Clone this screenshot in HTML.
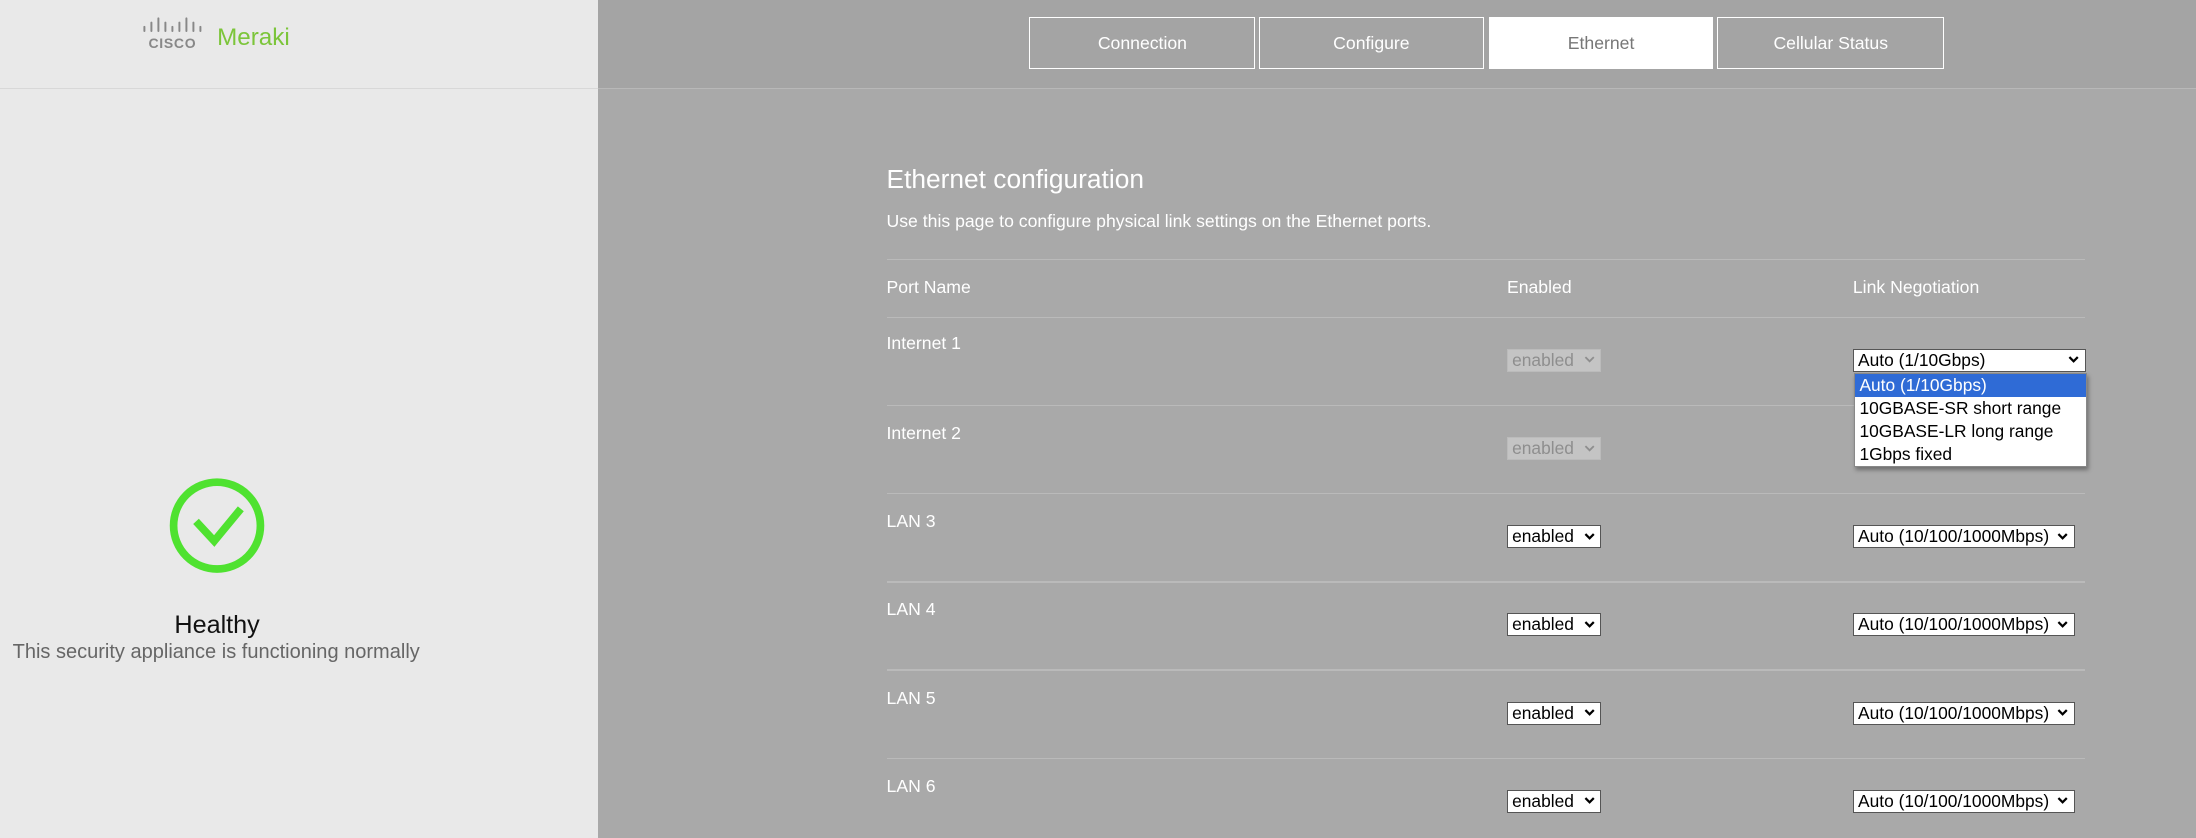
<!DOCTYPE html>
<html><head><meta charset="utf-8"><style>
html,body{margin:0;padding:0;overflow:hidden}
body{width:1568px;height:598px;zoom:1.40051;font-family:"Liberation Sans",Arial,sans-serif;position:relative;background:#a9a9a9}
.abs{position:absolute}
#left{left:0;top:0;width:427px;height:598px;background:#e9e9e9}
#lhead{left:0;top:0;width:427px;height:63px;border-bottom:1px solid #d8d8d8}
#rhead{left:427px;top:0;width:1141px;height:63px;background:#a4a4a4;border-bottom:1px solid #b8b8b8}
.tab{top:12px;height:36px;border:1px solid #fff;color:#fff;font-size:12.6px;line-height:36px;text-align:center;box-sizing:content-box}
.t{color:#fff;font-size:12.6px}
.line{left:633px;width:856px;height:1px;background:#bababa}
.sel{height:15px;border:1px solid #555;background:#fff;font-size:12.4px;line-height:15px;padding-left:3px;box-sizing:content-box;color:#000}
.sel.dis{background:#c4c4c4;border-color:#bbb;color:#8e8e8e}
.chev{position:absolute;right:4px;top:4px;width:8px;height:6px}
</style></head><body>
<div id="left" class="abs"></div>
<div id="lhead" class="abs"></div>
<svg class="abs" style="left:102px;top:12px" width="42" height="24" viewBox="0 0 42 24">
<g stroke="#888" stroke-width="1.4" stroke-linecap="round">
<line x1="1" y1="7" x2="1" y2="10"/><line x1="6" y1="4" x2="6" y2="10"/><line x1="11" y1="1" x2="11" y2="10"/><line x1="16" y1="4" x2="16" y2="10"/><line x1="21" y1="7" x2="21" y2="10"/><line x1="26" y1="4" x2="26" y2="10"/><line x1="31" y1="1" x2="31" y2="10"/><line x1="36" y1="4" x2="36" y2="10"/><line x1="41" y1="7" x2="41" y2="10"/></g>
<text x="21" y="22" text-anchor="middle" font-family="Liberation Sans" font-weight="bold" font-size="10" fill="#888" letter-spacing="0.5">CISCO</text></svg>
<div class="abs" style="left:155px;top:17px;font-size:17.3px;color:#7cc53a">Meraki</div>
<svg class="abs" style="left:120px;top:341px" width="70" height="70" viewBox="0 0 70 70"><circle cx="35" cy="34" r="31" fill="none" stroke="#4fe230" stroke-width="5.5"/><path d="M20 31 L33 45 L52 22" fill="none" stroke="#4fe230" stroke-width="5.5"/></svg>
<div class="abs" style="left:0;width:310px;text-align:center;top:436px;font-size:18px;color:#111">Healthy</div>
<div class="abs" style="left:9px;top:458px;font-size:14.3px;color:#666">This security appliance is functioning normally</div>

<div id="rhead" class="abs"></div>
<div class="abs tab" style="left:735px;width:160px">Connection</div>
<div class="abs tab" style="left:899px;width:159px">Configure</div>
<div class="abs tab" style="left:1063px;width:159px;background:#fff;color:#777">Ethernet</div>
<div class="abs tab" style="left:1226px;width:161px">Cellular Status</div>

<div class="abs" style="left:633px;top:117px;font-size:18.8px;color:#fff">Ethernet configuration</div>
<div class="abs t" style="left:633px;top:151px">Use this page to configure physical link settings on the Ethernet ports.</div>
<div class="abs line" style="top:185px"></div>
<div class="abs t" style="left:633px;top:198px">Port Name</div>
<div class="abs t" style="left:1076px;top:198px">Enabled</div>
<div class="abs t" style="left:1323px;top:198px">Link Negotiation</div>
<div class="abs line" style="top:226px"></div>

<div class="abs t" style="left:633px;top:238px">Internet 1</div>
<div class="abs sel dis" style="left:1076px;top:249px;width:63px">enabled<svg class="chev" viewBox="0 0 8 6"><path d="M1 1.5L4 4.5L7 1.5" fill="none" stroke="#8e8e8e" stroke-width="1.3"/></svg></div>
<div class="abs sel" style="left:1323px;top:249px;width:162px">Auto (1/10Gbps)<svg class="chev" viewBox="0 0 8 6"><path d="M1 1.5L4 4.5L7 1.5" fill="none" stroke="#000" stroke-width="1.6"/></svg></div>
<div class="abs line" style="top:289px"></div>

<div class="abs t" style="left:633px;top:302px">Internet 2</div>
<div class="abs sel dis" style="left:1076px;top:312px;width:63px">enabled<svg class="chev" viewBox="0 0 8 6"><path d="M1 1.5L4 4.5L7 1.5" fill="none" stroke="#8e8e8e" stroke-width="1.3"/></svg></div>
<div class="abs line" style="top:352px"></div>

<div class="abs t" style="left:633px;top:365px">LAN 3</div>
<div class="abs t" style="left:633px;top:428px">LAN 4</div>
<div class="abs t" style="left:633px;top:491px">LAN 5</div>
<div class="abs t" style="left:633px;top:554px">LAN 6</div>
<div class="abs line" style="top:415px"></div>
<div class="abs line" style="top:478px"></div>
<div class="abs line" style="top:541px"></div>

<div class="abs sel" style="left:1076px;top:375px;width:63px">enabled<svg class="chev" viewBox="0 0 8 6"><path d="M1 1.5L4 4.5L7 1.5" fill="none" stroke="#000" stroke-width="1.6"/></svg></div>
<div class="abs sel" style="left:1076px;top:438px;width:63px">enabled<svg class="chev" viewBox="0 0 8 6"><path d="M1 1.5L4 4.5L7 1.5" fill="none" stroke="#000" stroke-width="1.6"/></svg></div>
<div class="abs sel" style="left:1076px;top:501px;width:63px">enabled<svg class="chev" viewBox="0 0 8 6"><path d="M1 1.5L4 4.5L7 1.5" fill="none" stroke="#000" stroke-width="1.6"/></svg></div>
<div class="abs sel" style="left:1076px;top:564px;width:63px">enabled<svg class="chev" viewBox="0 0 8 6"><path d="M1 1.5L4 4.5L7 1.5" fill="none" stroke="#000" stroke-width="1.6"/></svg></div>

<div class="abs sel" style="left:1323px;top:375px;width:154px">Auto (10/100/1000Mbps)<svg class="chev" viewBox="0 0 8 6"><path d="M1 1.5L4 4.5L7 1.5" fill="none" stroke="#000" stroke-width="1.6"/></svg></div>
<div class="abs sel" style="left:1323px;top:438px;width:154px">Auto (10/100/1000Mbps)<svg class="chev" viewBox="0 0 8 6"><path d="M1 1.5L4 4.5L7 1.5" fill="none" stroke="#000" stroke-width="1.6"/></svg></div>
<div class="abs sel" style="left:1323px;top:501px;width:154px">Auto (10/100/1000Mbps)<svg class="chev" viewBox="0 0 8 6"><path d="M1 1.5L4 4.5L7 1.5" fill="none" stroke="#000" stroke-width="1.6"/></svg></div>
<div class="abs sel" style="left:1323px;top:564px;width:154px">Auto (10/100/1000Mbps)<svg class="chev" viewBox="0 0 8 6"><path d="M1 1.5L4 4.5L7 1.5" fill="none" stroke="#000" stroke-width="1.6"/></svg></div>

<div class="abs" style="left:1324px;top:266px;width:165px;height:66px;background:#fff;border:1px solid #888;box-shadow:1px 2px 3px rgba(0,0,0,.35);font-size:12.4px;line-height:16.5px;color:#000">
<div style="background:#2f6bd6;color:#fff;padding-left:3px">Auto (1/10Gbps)</div>
<div style="padding-left:3px">10GBASE-SR short range</div>
<div style="padding-left:3px">10GBASE-LR long range</div>
<div style="padding-left:3px">1Gbps fixed</div>
</div>
</body></html>
